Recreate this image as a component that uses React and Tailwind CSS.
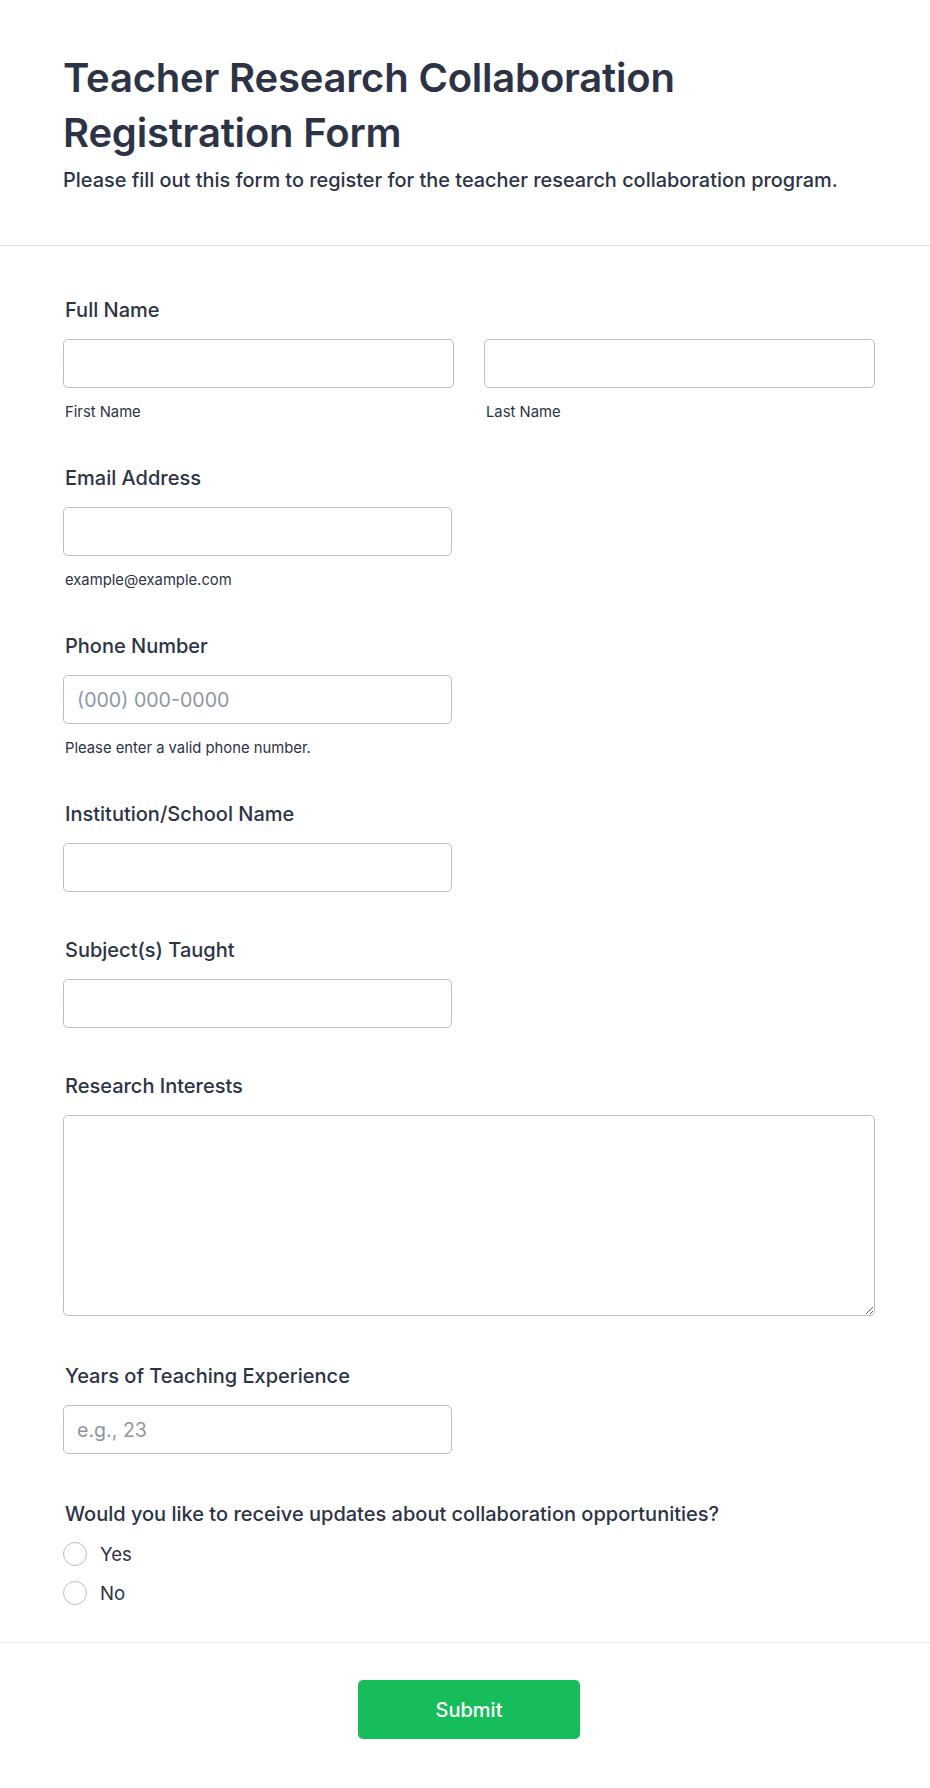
import React, { useState } from "react";

// shared bits
const inputCls =
  "block h-[49px] rounded-[5px] border border-[#b8bdc9] bg-white px-[13px] text-[19.6px] text-[#2c3345] placeholder:text-[#8f96a3] outline-none";

function Label({ children }) {
  return (
    <label className="block pl-[2px] text-[20px] leading-[27px] font-medium text-[#2c3345]">
      {children}
    </label>
  );
}

function Sub({ children }) {
  return (
    <div className="mt-[13px] pl-[2px] text-[14.8px] leading-[22px] text-[#2c3345]">
      {children}
    </div>
  );
}

function App() {
  const [updates, setUpdates] = useState("");

  return (
    <div
      className="min-h-screen bg-white text-[#2c3345]"
      style={{ fontFamily: "Inter, 'Noto Sans', sans-serif" }}
    >
      {/* header */}
      <div className="pl-[63px] pr-[55px] pt-[50px] pb-[51px] border-b border-[#d8dbe2]">
        <h1 className="max-w-[700px] text-[40px] leading-[55px] font-semibold tracking-[-0.2px] text-[#2c3345]">
          Teacher Research Collaboration Registration Form
        </h1>
        <p className="mt-[7px] text-[19.9px] leading-[27px] font-medium text-[#2c3345]">
          Please fill out this form to register for the teacher research collaboration program.
        </p>
      </div>

      {/* fields */}
      <div className="pl-[63px] pr-[55px] pt-[51px] pb-[37px] border-b border-[#e6e8ed] flex flex-col gap-[42px]">
        <div>
          <Label>Full Name</Label>
          <div className="mt-[15px] grid grid-cols-2 gap-[30px]">
            <div>
              <input type="text" className={`${inputCls} w-full`} />
              <Sub>First Name</Sub>
            </div>
            <div>
              <input type="text" className={`${inputCls} w-full`} />
              <Sub>Last Name</Sub>
            </div>
          </div>
        </div>

        <div>
          <Label>Email Address</Label>
          <input type="email" className={`${inputCls} mt-[15px] w-[389px]`} />
          <Sub>example@example.com</Sub>
        </div>

        <div>
          <Label>Phone Number</Label>
          <input
            type="tel"
            placeholder="(000) 000-0000"
            className={`${inputCls} mt-[15px] w-[389px]`}
          />
          <Sub>Please enter a valid phone number.</Sub>
        </div>

        <div className="pb-[3px]">
          <Label>Institution/School Name</Label>
          <input type="text" className={`${inputCls} mt-[15px] w-[389px]`} />
        </div>

        <div className="pb-[3px]">
          <Label>Subject(s) Taught</Label>
          <input type="text" className={`${inputCls} mt-[15px] w-[389px]`} />
        </div>

        <div className="pb-[5px]">
          <Label>Research Interests</Label>
          <textarea className="mt-[15px] block h-[201px] w-full rounded-[5px] border border-[#b8bdc9] bg-white px-[13px] py-[10px] text-[19.6px] outline-none" />
        </div>

        <div className="pb-[5px]">
          <Label>Years of Teaching Experience</Label>
          <input
            type="number"
            placeholder="e.g., 23"
            className={`${inputCls} mt-[15px] w-[389px]`}
          />
        </div>

        <div>
          <Label>Would you like to receive updates about collaboration opportunities?</Label>
          <div className="mt-[14px] flex flex-col gap-[15px]">
            {["Yes", "No"].map((opt) => (
              <label key={opt} className="flex items-center gap-[13px] cursor-pointer">
                <span
                  onClick={() => setUpdates(opt)}
                  className="flex h-[24px] w-[24px] items-center justify-center rounded-full border border-[#b8bdc9] bg-white"
                >
                  {updates === opt && <span className="h-[12px] w-[12px] rounded-full bg-[#18bd5b]" />}
                </span>
                <span className="text-[18.6px] leading-[24px] text-[#2c3345]">{opt}</span>
              </label>
            ))}
          </div>
        </div>
      </div>

      {/* submit */}
      <div className="pl-[63px] pr-[55px] pt-[37px] pb-[50px] flex justify-center">
        <button className="h-[59px] w-[222px] rounded-[5px] bg-[#18bd5b] text-[20px] font-medium text-white">
          Submit
        </button>
      </div>
    </div>
  );
}

export default App;
